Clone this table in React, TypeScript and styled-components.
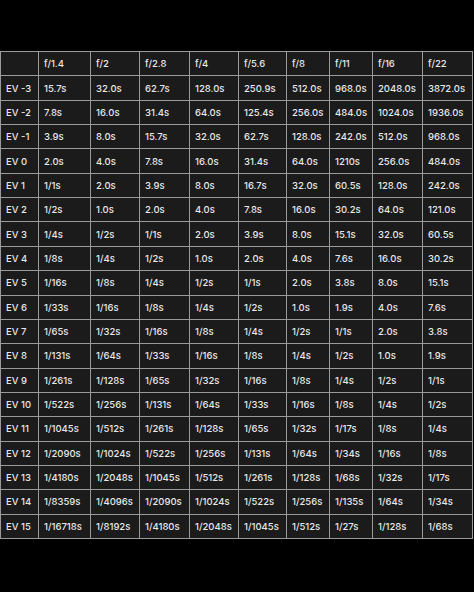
import React from "react";
import styled, { createGlobalStyle } from "styled-components";

const Global = createGlobalStyle`
  html, body { margin: 0; padding: 0; background: #000; }
  body { width: 474px; height: 592px; overflow: hidden; }
`;

const Page = styled.div`
  width: 474px;
  height: 592px;
  background: #000;
  padding-top: 51px;
  box-sizing: border-box;
`;

const Table = styled.div`
  display: grid;
  width: 473px;
  height: 488px;
  box-sizing: border-box;
  grid-template-columns: 37px 51px 48px 49px 48px 47px 42px 42px 49px 49px;
  grid-template-rows: repeat(20, 1fr);
  gap: 1px;
  padding: 1px;
  background: #9a9a9a;
`;

const Cell = styled.div`
  background: #1b1b1b;
  color: #e8e8e8;
  font-family: Inter, "Liberation Sans", Arial, sans-serif;
  font-size: 9.5px;
  font-weight: 500;
  display: flex;
  align-items: center;
  padding-left: 5px;
  white-space: nowrap;
  overflow: hidden;
`;

const header = ["", "f/1.4", "f/2", "f/2.8", "f/4", "f/5.6", "f/8", "f/11", "f/16", "f/22"];

const rows: string[][] = [
  ["EV -3", "15.7s", "32.0s", "62.7s", "128.0s", "250.9s", "512.0s", "968.0s", "2048.0s", "3872.0s"],
  ["EV -2", "7.8s", "16.0s", "31.4s", "64.0s", "125.4s", "256.0s", "484.0s", "1024.0s", "1936.0s"],
  ["EV -1", "3.9s", "8.0s", "15.7s", "32.0s", "62.7s", "128.0s", "242.0s", "512.0s", "968.0s"],
  ["EV 0", "2.0s", "4.0s", "7.8s", "16.0s", "31.4s", "64.0s", "1210s", "256.0s", "484.0s"],
  ["EV 1", "1/1s", "2.0s", "3.9s", "8.0s", "16.7s", "32.0s", "60.5s", "128.0s", "242.0s"],
  ["EV 2", "1/2s", "1.0s", "2.0s", "4.0s", "7.8s", "16.0s", "30.2s", "64.0s", "121.0s"],
  ["EV 3", "1/4s", "1/2s", "1/1s", "2.0s", "3.9s", "8.0s", "15.1s", "32.0s", "60.5s"],
  ["EV 4", "1/8s", "1/4s", "1/2s", "1.0s", "2.0s", "4.0s", "7.6s", "16.0s", "30.2s"],
  ["EV 5", "1/16s", "1/8s", "1/4s", "1/2s", "1/1s", "2.0s", "3.8s", "8.0s", "15.1s"],
  ["EV 6", "1/33s", "1/16s", "1/8s", "1/4s", "1/2s", "1.0s", "1.9s", "4.0s", "7.6s"],
  ["EV 7", "1/65s", "1/32s", "1/16s", "1/8s", "1/4s", "1/2s", "1/1s", "2.0s", "3.8s"],
  ["EV 8", "1/131s", "1/64s", "1/33s", "1/16s", "1/8s", "1/4s", "1/2s", "1.0s", "1.9s"],
  ["EV 9", "1/261s", "1/128s", "1/65s", "1/32s", "1/16s", "1/8s", "1/4s", "1/2s", "1/1s"],
  ["EV 10", "1/522s", "1/256s", "1/131s", "1/64s", "1/33s", "1/16s", "1/8s", "1/4s", "1/2s"],
  ["EV 11", "1/1045s", "1/512s", "1/261s", "1/128s", "1/65s", "1/32s", "1/17s", "1/8s", "1/4s"],
  ["EV 12", "1/2090s", "1/1024s", "1/522s", "1/256s", "1/131s", "1/64s", "1/34s", "1/16s", "1/8s"],
  ["EV 13", "1/4180s", "1/2048s", "1/1045s", "1/512s", "1/261s", "1/128s", "1/68s", "1/32s", "1/17s"],
  ["EV 14", "1/8359s", "1/4096s", "1/2090s", "1/1024s", "1/522s", "1/256s", "1/135s", "1/64s", "1/34s"],
  ["EV 15", "1/16718s", "1/8192s", "1/4180s", "1/2048s", "1/1045s", "1/512s", "1/27s", "1/128s", "1/68s"],
];

export default function App() {
  return (
    <>
      <Global />
      <Page>
        <Table>
          {[header, ...rows].map((r, i) =>
            r.map((c, j) => <Cell key={`${i}-${j}`}>{c}</Cell>)
          )}
        </Table>
      </Page>
    </>
  );
}
